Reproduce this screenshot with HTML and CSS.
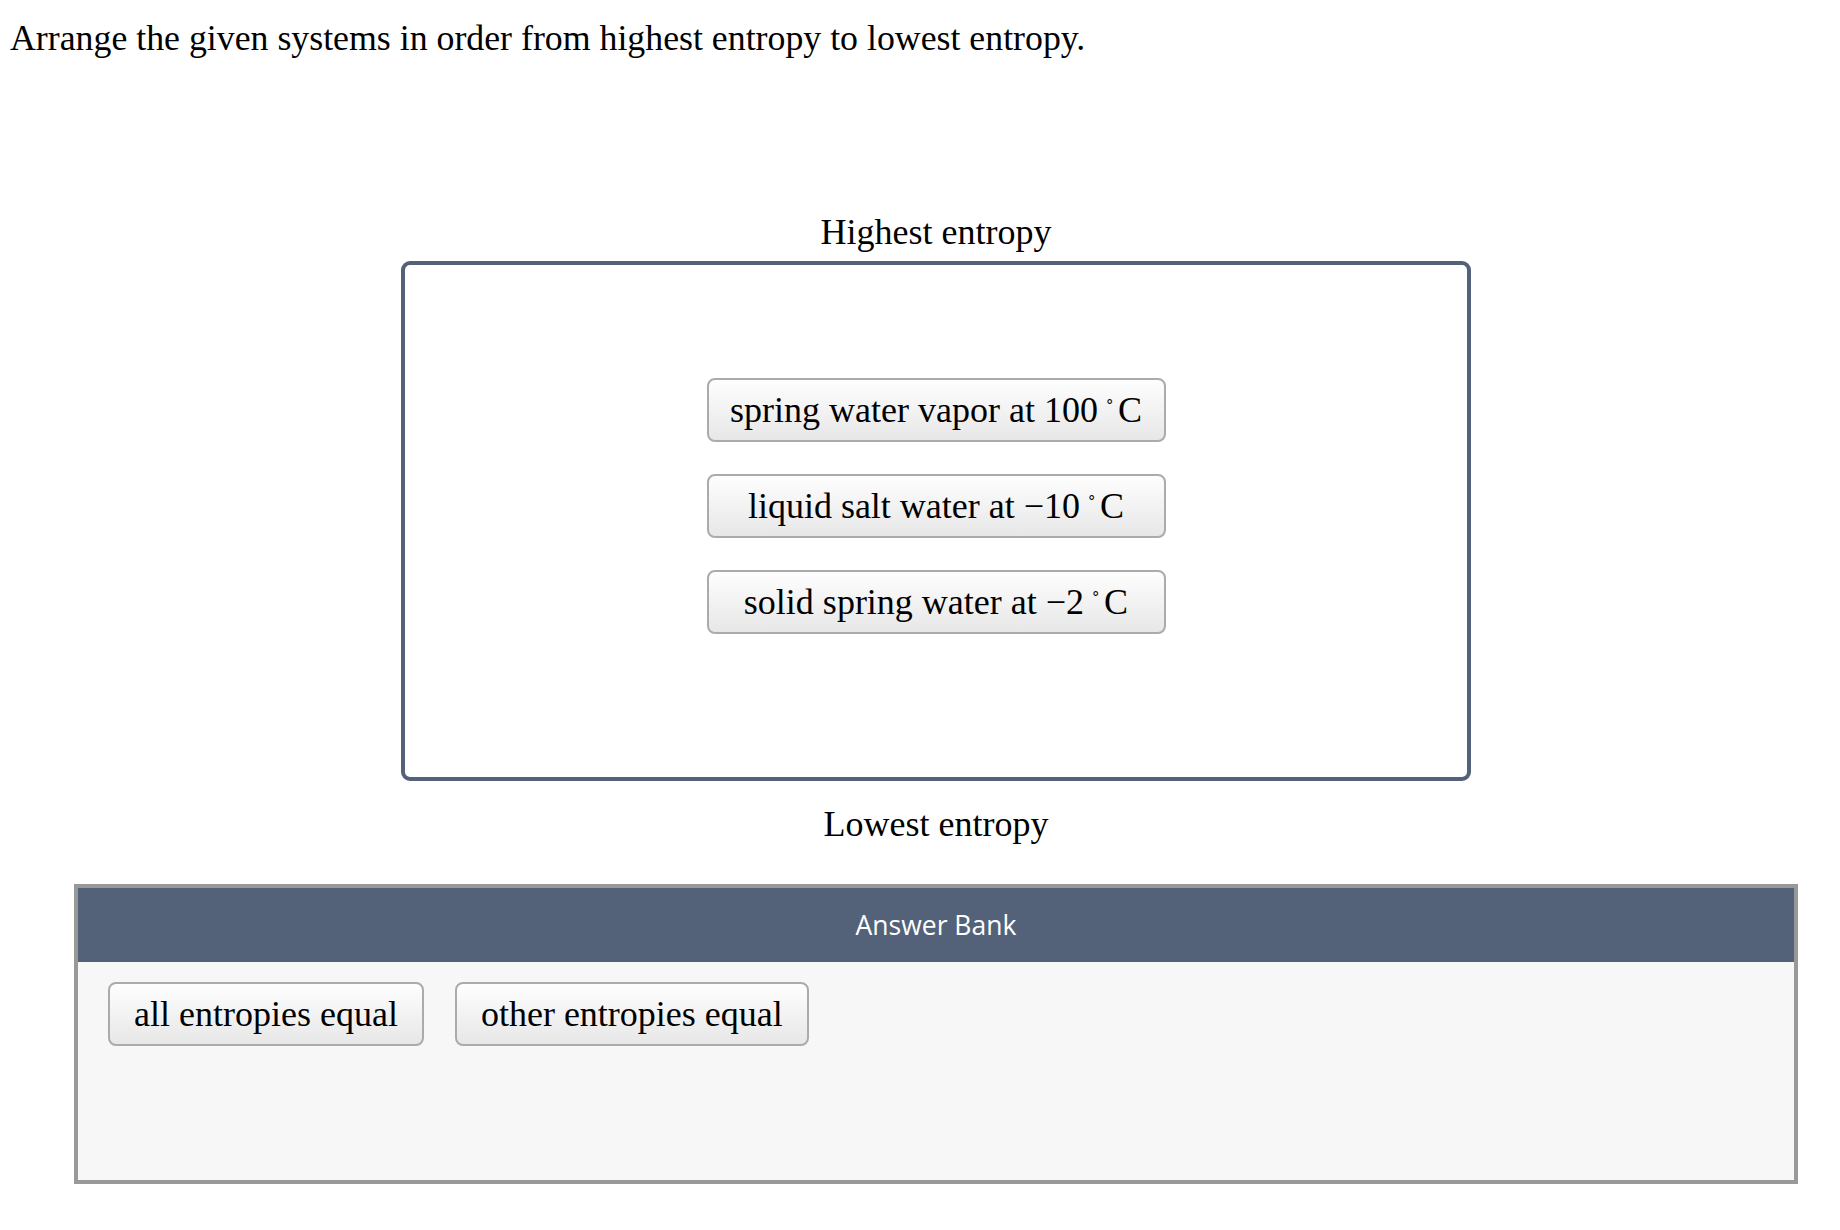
FILE: index.html
```html
<!DOCTYPE html>
<html lang="en">
<head>
<meta charset="utf-8">
<title>Entropy ranking</title>
<link rel="stylesheet" href="styles.css">
</head>
<body>
<p class="prompt">Arrange the given systems in order from highest entropy to lowest entropy.</p>
<div class="workspace">
  <div class="rank-label rank-top">Highest entropy</div>
  <div class="dropzone">
    <div class="chip chip-fixed">spring water vapor at 100<span class="deg">∘</span>C</div>
    <div class="chip chip-fixed">liquid salt water at −10<span class="deg">∘</span>C</div>
    <div class="chip chip-fixed">solid spring water at −2<span class="deg">∘</span>C</div>
  </div>
  <div class="rank-label rank-bottom">Lowest entropy</div>
  <div class="bank">
    <div class="bank-header">Answer Bank</div>
    <div class="bank-body">
      <div class="chip">all entropies equal</div>
      <div class="chip">other entropies equal</div>
    </div>
  </div>
</div>
</body>
</html>
```
FILE: styles.css
```css
html, body {
  margin: 0;
  padding: 0;
  background: #ffffff;
}
body {
  font-family: "Liberation Serif", "Times New Roman", serif;
  font-size: 36px;
  line-height: 41px;
  color: #000;
}
.prompt {
  margin: 0;
  padding: 18px 0 0 10px;
  font-size: 35.8px;
}
.workspace {
  margin: 0 42px 0 74px;
  display: flex;
  flex-direction: column;
  align-items: center;
}
.rank-label {
  text-align: center;
}
.rank-top {
  margin-top: 153px;
}
.dropzone {
  margin-top: 8px;
  box-sizing: border-box;
  width: 1070px;
  height: 520px;
  border: 4px solid #536279;
  border-radius: 9px;
  padding-top: 113px;
  display: flex;
  flex-direction: column;
  align-items: center;
  gap: 32px;
}
.rank-bottom {
  margin-top: 23px;
}
.chip {
  box-sizing: border-box;
  height: 64px;
  padding: 10px 24px;
  border: 2px solid #ababab;
  border-radius: 8px;
  background: linear-gradient(#fefefe, #e7e7e7);
  white-space: nowrap;
  text-align: center;
}
.chip-fixed {
  width: 459px;
  padding: 10px 0;
}
.deg {
  display: inline-block;
  font-size: 15px;
  line-height: 1;
  vertical-align: 16px;
  margin: 0 4px 0 7px;
}
.bank {
  margin-top: 39px;
  align-self: stretch;
  border: 4px solid #999999;
  background: #f7f7f7;
  height: 300px;
  box-sizing: border-box;
  display: flex;
  flex-direction: column;
}
.bank-header {
  height: 74px;
  background: #536279;
  color: #ffffff;
  font-family: "Open Sans", "Noto Sans", sans-serif;
  font-size: 26.5px;
  font-weight: 500;
  line-height: 74px;
  text-align: center;
}
.bank-body {
  padding: 20px 30px;
  display: flex;
  flex-wrap: wrap;
  gap: 31px;
  align-items: flex-start;
}
```
